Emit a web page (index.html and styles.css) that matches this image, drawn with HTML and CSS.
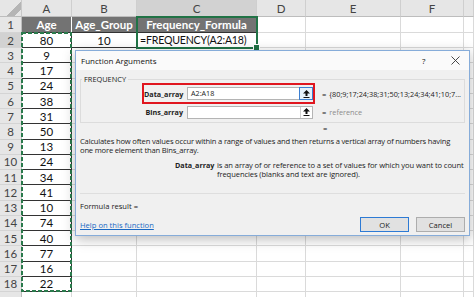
FILE: index.html
```html
<!DOCTYPE html>
<html>
<head>
<meta charset="utf-8">
<link rel="stylesheet" href="styles.css">
</head>
<body>
<div class="sheet">
  <div class="row hdr"><span class="corner"></span><span class="ch">A</span><span class="ch">B</span><span class="ch sel">C</span><span class="ch">D</span><span class="ch">E</span><span class="ch">F</span><span class="ch"></span></div>
  <div class="row r1"><span class="rh">1</span><span class="c th">Age</span><span class="c th">Age_Group</span><span class="c th">Frequency_Formula</span><span class="c"></span><span class="c"></span><span class="c"></span><span class="c"></span></div>
  <div class="row"><span class="rh sel">2</span><span class="c t">80</span><span class="c t">10</span><span class="c t f">=FREQUENCY(A2:A18)</span><span class="c"></span><span class="c"></span><span class="c"></span><span class="c"></span></div>
  <div class="row"><span class="rh">3</span><span class="c t">9</span><span class="c"></span><span class="c"></span><span class="c"></span><span class="c"></span><span class="c"></span><span class="c"></span></div>
  <div class="row"><span class="rh">4</span><span class="c t">17</span><span class="c"></span><span class="c"></span><span class="c"></span><span class="c"></span><span class="c"></span><span class="c"></span></div>
  <div class="row"><span class="rh">5</span><span class="c t">24</span><span class="c"></span><span class="c"></span><span class="c"></span><span class="c"></span><span class="c"></span><span class="c"></span></div>
  <div class="row"><span class="rh">6</span><span class="c t">38</span><span class="c"></span><span class="c"></span><span class="c"></span><span class="c"></span><span class="c"></span><span class="c"></span></div>
  <div class="row"><span class="rh">7</span><span class="c t">31</span><span class="c"></span><span class="c"></span><span class="c"></span><span class="c"></span><span class="c"></span><span class="c"></span></div>
  <div class="row"><span class="rh">8</span><span class="c t">50</span><span class="c"></span><span class="c"></span><span class="c"></span><span class="c"></span><span class="c"></span><span class="c"></span></div>
  <div class="row"><span class="rh">9</span><span class="c t">13</span><span class="c"></span><span class="c"></span><span class="c"></span><span class="c"></span><span class="c"></span><span class="c"></span></div>
  <div class="row"><span class="rh">10</span><span class="c t">24</span><span class="c"></span><span class="c"></span><span class="c"></span><span class="c"></span><span class="c"></span><span class="c"></span></div>
  <div class="row"><span class="rh">11</span><span class="c t">34</span><span class="c"></span><span class="c"></span><span class="c"></span><span class="c"></span><span class="c"></span><span class="c"></span></div>
  <div class="row"><span class="rh">12</span><span class="c t">41</span><span class="c"></span><span class="c"></span><span class="c"></span><span class="c"></span><span class="c"></span><span class="c"></span></div>
  <div class="row"><span class="rh">13</span><span class="c t">10</span><span class="c"></span><span class="c"></span><span class="c"></span><span class="c"></span><span class="c"></span><span class="c"></span></div>
  <div class="row"><span class="rh">14</span><span class="c t">74</span><span class="c"></span><span class="c"></span><span class="c"></span><span class="c"></span><span class="c"></span><span class="c"></span></div>
  <div class="row"><span class="rh">15</span><span class="c t">40</span><span class="c"></span><span class="c"></span><span class="c"></span><span class="c"></span><span class="c"></span><span class="c"></span></div>
  <div class="row"><span class="rh">16</span><span class="c t">77</span><span class="c"></span><span class="c"></span><span class="c"></span><span class="c"></span><span class="c"></span><span class="c"></span></div>
  <div class="row"><span class="rh">17</span><span class="c t">16</span><span class="c"></span><span class="c"></span><span class="c"></span><span class="c"></span><span class="c"></span><span class="c"></span></div>
  <div class="row"><span class="rh">18</span><span class="c t">22</span><span class="c"></span><span class="c"></span><span class="c"></span><span class="c"></span><span class="c"></span><span class="c"></span></div>
  <div class="row"><span class="rh"></span><span class="c"></span><span class="c"></span><span class="c"></span><span class="c"></span><span class="c"></span><span class="c"></span><span class="c"></span></div>

  <svg class="ants" width="52" height="261" viewBox="0 0 52 261"><rect x="1" y="1" width="49" height="258" fill="none" stroke="#2a7a4c" stroke-width="2" stroke-dasharray="4 2"/></svg>
  <div class="selbox"><span class="handle"></span></div>

  <div class="dialog">
    <div class="titlebar">
      <span class="title">Function Arguments</span>
      <span class="qm">?</span>
      <svg class="close" width="9" height="9" viewBox="0 0 9 9"><path d="M0.5 0.5 L8.5 8.5 M8.5 0.5 L0.5 8.5" stroke="#333" stroke-width="0.9"/></svg>
    </div>
    <div class="body">
      <fieldset class="args">
        <legend>FREQUENCY</legend>
        <div class="arg">
          <div class="argbox hl">
            <span class="lbl">Data_array</span>
            <span class="inp"><span class="val">A2:A18</span><span class="pick focus"><svg width="7" height="8" viewBox="0 0 7 8"><path d="M3.5 0 L7 3.6 H4.5 V6 H2.5 V3.6 H0 Z" fill="#111"/><rect x="0.5" y="7" width="6" height="1" fill="#111"/></svg></span></span>
          </div>
          <span class="eq">=</span><span class="res">{80;9;17;24;38;31;50;13;24;34;41;10;7...</span>
        </div>
        <div class="arg">
          <div class="argbox">
            <span class="lbl">Bins_array</span>
            <span class="inp"><span class="val"></span><span class="pick"><svg width="7" height="8" viewBox="0 0 7 8"><path d="M3.5 0 L7 3.6 H4.5 V6 H2.5 V3.6 H0 Z" fill="#111"/><rect x="0.5" y="7" width="6" height="1" fill="#111"/></svg></span></span>
          </div>
          <span class="eq">=</span><span class="res grey">reference</span>
        </div>
      </fieldset>
      <div class="fres">=</div>
      <p class="desc">Calculates how often values occur within a range of values and then returns a vertical array of numbers having<br>one more element than Bins_array.</p>
      <div class="arghelp"><b>Data_array</b><span>is an array of or reference to a set of values for which you want to count<br>frequencies (blanks and text are ignored).</span></div>
      <div class="footer">
        <div class="fleft">
          <div>Formula result =</div>
          <a class="link">Help on this function</a>
        </div>
        <div class="btns"><span class="btn ok">OK</span><span class="btn">Cancel</span></div>
      </div>
    </div>
  </div>
</div>
</body>
</html>
```
FILE: styles.css
```css
html, body { margin: 0; padding: 0; background: #fff; }
.sheet { position: relative; width: 474px; height: 297px; overflow: hidden; font-family: Lato, "Open Sans", sans-serif; }
.row { display: grid; grid-template-columns: 22px 50px 65px 120px 49px 95px 63px 10px; height: 15.24px; }
.row > span { box-sizing: border-box; display: flex; align-items: center; justify-content: center; overflow: hidden; white-space: nowrap; }
.hdr { height: 17px; }
.r1 { height: 16px; }
.corner { background: #e6e6e6 linear-gradient(135deg, transparent 60%, #b5b5b5 60%, #b5b5b5 82%, transparent 82%); border-right: 1px solid #c9c9c9; border-bottom: 1px solid #bdbdbd; }
.ch { background: #e6e6e6; color: #444; font-size: 11.5px; border-right: 1px solid #cfcfcf; border-bottom: 1px solid #bdbdbd; }
.ch.sel { background: #d2d2d2; }
.rh { background: #e6e6e6; color: #444; font-size: 11.5px; border-right: 1px solid #bdbdbd; border-bottom: 1px solid #d4d4d4; }
.rh.sel { background: #d2d2d2; }
.c { border-right: 1px solid #dadada; border-bottom: 1px solid #dadada; font-size: 11.5px; color: #111; }
.th { background: #737373; color: #fff; font-weight: bold; border-right-color: #fff; border-bottom-color: #333; }
.t { border-right-color: #333; border-bottom-color: #333; }
.c.f { justify-content: flex-start; padding-left: 3px; font-size: 10.6px; letter-spacing: -0.2px; }
.ants { position: absolute; left: 21px; top: 32px; }
.selbox { position: absolute; left: 136px; top: 16px; width: 122px; height: 33px; box-sizing: border-box; border: 2px solid #217346; }
.handle { position: absolute; right: -4px; bottom: -4px; width: 5px; height: 5px; background: #217346; border: 1px solid #fff; }

.dialog { position: absolute; left: 75px; top: 50px; width: 395px; height: 186px; box-sizing: border-box; display: flex; flex-direction: column; border: 1px solid #86acd9; background: #f0f0f0; box-shadow: 0 3px 12px rgba(0,0,0,0.28); font-family: "Open Sans", sans-serif; font-size: 7.6px; color: #222; }
.titlebar { display: flex; align-items: center; height: 19px; flex: none; padding-left: 5px; background: #fafafa; font-size: 8px; color: #111; }
.title { flex: 1; }
.qm { width: 8px; margin-right: 21px; font-size: 8px; }
.close { margin-right: 9px; }
.body { flex: 1; display: flex; flex-direction: column; padding: 0 4px; }
.args { margin: 5px 0 0 0; padding: 0 0 3px 0; border: 1px solid #dcdcdc; min-width: 0; }
.args legend { margin-left: 1px; padding: 0 2px; font-size: 7.4px; line-height: 9px; }
.arg { display: flex; align-items: center; }
.argbox { display: flex; align-items: center; width: 173px; height: 21px; box-sizing: border-box; margin-left: 61px; border: 2px solid transparent; }
.argbox.hl { border-color: #e0161f; margin-top: -1px; }
.arg + .arg .argbox { height: 14px; border-width: 0 2px; margin-top: 1px; }
.lbl { width: 39px; text-align: right; font-weight: bold; font-size: 7.2px; }
.inp { display: flex; align-items: stretch; justify-content: space-between; margin-left: 4px; width: 126px; height: 13px; box-sizing: border-box; background: #fff; border: 1px solid #b4b4b4; }
.val { padding-left: 3px; line-height: 11px; font-size: 7.2px; }
.pick { width: 11px; display: flex; align-items: center; justify-content: center; border-left: 1px solid #d0d0d0; }
.pick.focus { border: 1px solid #3c7fd1; background: #e5f1fb; margin: -1px -1px -1px 0; width: 12px; }
.eq { margin-left: 7px; }
.res { margin-left: 3px; white-space: nowrap; font-size: 7.3px; }
.res.grey { color: #8c8c8c; }
.fres { margin: 1px 0 0 243px; line-height: 9px; }
.desc { margin: 4px 0 0 0; line-height: 9px; white-space: nowrap; letter-spacing: -0.18px; }
.arghelp { display: flex; margin: 5.5px 0 0 95px; line-height: 9px; white-space: nowrap; }
.arghelp span { letter-spacing: -0.1px; }
.arghelp b { width: 36px; text-align: right; margin-right: 6px; font-size: 7.2px; }
.footer { display: flex; justify-content: space-between; margin-top: auto; border-top: 1px solid #dedede; padding-bottom: 3px; height: 42px; box-sizing: border-box; }
.fleft { display: flex; flex-direction: column; gap: 10px; padding-top: 8px; line-height: 9px; }
.link { color: #1a69c4; text-decoration: underline; }
.btns { display: flex; gap: 7px; align-self: flex-end; margin-right: 0; }
.btn { width: 49px; height: 15px; box-sizing: border-box; display: flex; align-items: center; justify-content: center; background: #e1e1e1; border: 1px solid #adadad; }
.btn.ok { border-color: #2d7ad4; }
```
